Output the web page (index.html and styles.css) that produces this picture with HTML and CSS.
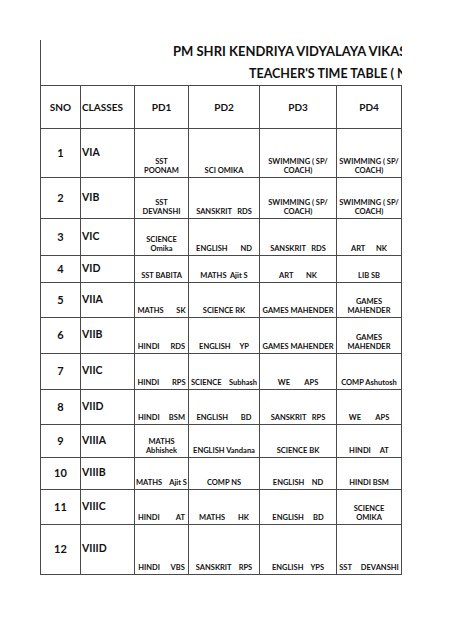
FILE: index.html
```html
<!DOCTYPE html>
<html lang="en">
<head>
<meta charset="utf-8">
<title>Teacher's Time Table</title>
<link rel="stylesheet" href="styles.css">
</head>
<body>
<div class="sheet">
  <div class="title-block">
    <div class="t1">PM SHRI KENDRIYA VIDYALAYA VIKASPURI</div>
    <div class="t2">TEACHER'S TIME TABLE ( NEW SESSION )</div>
  </div>
  <div class="grid">
    <div class="h">SNO</div><div class="h left">CLASSES</div><div class="h">PD1</div><div class="h">PD2</div><div class="h">PD3</div><div class="h">PD4</div>

    <div class="sno">1</div><div class="cls">VIA</div>
    <div class="pd">SST<br>POONAM</div><div class="pd">SCI OMIKA</div><div class="pd">SWIMMING ( SP/<br>COACH)</div><div class="pd">SWIMMING ( SP/<br>COACH)</div>

    <div class="sno">2</div><div class="cls">VIB</div>
    <div class="pd">SST<br>DEVANSHI</div><div class="pd">SANSKRIT   RDS</div><div class="pd">SWIMMING ( SP/<br>COACH)</div><div class="pd">SWIMMING ( SP/<br>COACH)</div>

    <div class="sno">3</div><div class="cls">VIC</div>
    <div class="pd">SCIENCE<br>Omika</div><div class="pd">ENGLISH       ND</div><div class="pd">SANSKRIT   RDS</div><div class="pd">ART      NK</div>

    <div class="sno">4</div><div class="cls">VID</div>
    <div class="pd">SST BABITA</div><div class="pd">MATHS  Ajit S</div><div class="pd">ART       NK</div><div class="pd">LIB SB</div>

    <div class="sno">5</div><div class="cls">VIIA</div>
    <div class="pd">MATHS       SK</div><div class="pd">SCIENCE RK</div><div class="pd">GAMES MAHENDER</div><div class="pd">GAMES<br>MAHENDER</div>

    <div class="sno">6</div><div class="cls">VIIB</div>
    <div class="pd">HINDI      RDS</div><div class="pd">ENGLISH     YP</div><div class="pd">GAMES MAHENDER</div><div class="pd">GAMES<br>MAHENDER</div>

    <div class="sno">7</div><div class="cls">VIIC</div>
    <div class="pd">HINDI       RPS</div><div class="pd">SCIENCE    Subhash</div><div class="pd">WE        APS</div><div class="pd">COMP Ashutosh</div>

    <div class="sno">8</div><div class="cls">VIID</div>
    <div class="pd">HINDI     BSM</div><div class="pd">ENGLISH       BD</div><div class="pd">SANSKRIT   RPS</div><div class="pd">WE        APS</div>

    <div class="sno">9</div><div class="cls">VIIIA</div>
    <div class="pd">MATHS<br>Abhishek</div><div class="pd">ENGLISH Vandana</div><div class="pd">SCIENCE BK</div><div class="pd">HINDI     AT</div>

    <div class="sno">10</div><div class="cls">VIIIB</div>
    <div class="pd">MATHS    Ajit S</div><div class="pd">COMP NS</div><div class="pd">ENGLISH    ND</div><div class="pd">HINDI BSM</div>

    <div class="sno">11</div><div class="cls">VIIIC</div>
    <div class="pd">HINDI         AT</div><div class="pd">MATHS       HK</div><div class="pd">ENGLISH     BD</div><div class="pd">SCIENCE<br>OMIKA</div>

    <div class="sno">12</div><div class="cls">VIIID</div>
    <div class="pd">HINDI      VBS</div><div class="pd">SANSKRIT    RPS</div><div class="pd">ENGLISH    YPS</div><div class="pd">SST     DEVANSHI</div>
  </div>
</div>
</body>
</html>
```

FILE: styles.css
```css
html, body {
  margin: 0;
  padding: 0;
  background: #ffffff;
}

body {
  font-family: "Lato", "Liberation Sans", sans-serif;
  font-weight: 700;
  color: #111111;
}

.sheet {
  margin: 40px 0 0 40px;
  width: 362px;
  overflow: hidden;
}

.title-block {
  height: 45px;
  border-left: 1px solid #4a4a4a;
  box-sizing: border-box;
  white-space: nowrap;
}

.t1 {
  font-size: 13px;
  line-height: 16px;
  padding-left: 132px;
  padding-top: 3px;
}

.t2 {
  font-size: 12.5px;
  line-height: 16px;
  padding-left: 208px;
  padding-top: 7px;
}

.grid {
  display: grid;
  grid-template-columns: 39px 53px 53px 70px 76px 64px;
  grid-template-rows: 42px 48px 40px 36px 26px 34px 35px 35px 34px 32px 31px 34px 49px;
  gap: 1px;
  padding: 1px;
  background: #4a4a4a;
  width: 362px;
  box-sizing: border-box;
}

.grid > div {
  background: #ffffff;
  display: flex;
  overflow: visible;
  white-space: pre;
}

.h {
  font-size: 10px;
  align-items: center;
  justify-content: center;
}

.h.left {
  justify-content: flex-start;
  padding-left: 1px;
}

.sno {
  font-size: 11px;
  align-items: center;
  justify-content: center;
  padding-bottom: 2px;
}

.cls {
  font-size: 10.5px;
  align-items: center;
  justify-content: flex-start;
  padding-left: 1px;
  padding-bottom: 3px;
}

.pd {
  font-size: 7.5px;
  line-height: 8.7px;
  flex-direction: column;
  justify-content: flex-end;
  align-items: center;
  text-align: center;
  padding-bottom: 1.5px;
}
```
